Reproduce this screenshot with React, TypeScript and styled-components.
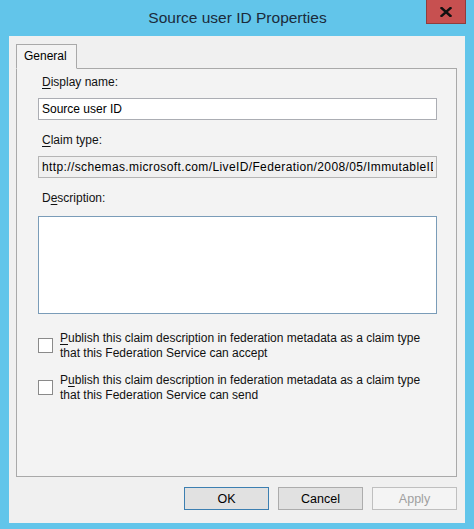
import React, { useState } from 'react';
import styled, { createGlobalStyle } from 'styled-components';

const GlobalStyle = createGlobalStyle`
  html, body {
    margin: 0;
    padding: 0;
    background: #62c5ea;
  }
  body {
    font-family: "Liberation Sans", Arial, sans-serif;
    font-size: 12px;
    color: #000;
  }
`;

const Window = styled.div`
  width: 474px;
  height: 529px;
  background: #62c5ea;
  display: flex;
  flex-direction: column;
  box-sizing: border-box;
  padding: 0 9px 6px;
`;

const TitleBar = styled.div`
  height: 36px;
  display: grid;
  grid-template-columns: 1fr auto 1fr;
  align-items: start;
  margin: 0 -1px 0 0;
`;

const Title = styled.div`
  grid-column: 2;
  padding-top: 9px;
  font-size: 15.5px;
  color: #1b2b3b;
  white-space: nowrap;
`;

const CloseButton = styled.button`
  grid-column: 3;
  justify-self: end;
  width: 40px;
  height: 24px;
  margin: 0;
  padding: 0;
  border: 1px solid #8f3d3d;
  border-top: none;
  background: #c75050;
  display: flex;
  align-items: center;
  justify-content: center;
  cursor: pointer;
`;

const Client = styled.div`
  flex: 1;
  background: #f0f0f0;
  display: flex;
  flex-direction: column;
  padding: 8px 8px 13px 7px;
  box-sizing: border-box;
`;

const TabStrip = styled.div`
  display: flex;
  height: 24px;
  position: relative;
  z-index: 1;
`;

const Tab = styled.div<{ $active?: boolean }>`
  width: 61px;
  box-sizing: border-box;
  border: 1px solid #a9a9a9;
  border-bottom: ${p => (p.$active ? '1px solid #f3f3f3' : '1px solid #a9a9a9')};
  background: ${p => (p.$active ? '#f3f3f3' : '#e8e8e8')};
  padding: 4px 0 0 7px;
  height: 25px;
`;

const Panel = styled.div`
  flex: 1;
  border: 1px solid #a9a9a9;
  background: #f3f3f3;
  padding: 5px 19px 0 21px;
  display: flex;
  flex-direction: column;
`;

const Label = styled.div`
  padding: 0 0 0 4px;
  height: 16px;
  line-height: 16px;
  margin-bottom: 8px;
  color: #111;
`;

const Key = styled.span`
  text-decoration: underline;
  text-underline-offset: 2px;
`;

const TextInput = styled.input<{ $readOnly?: boolean }>`
  box-sizing: border-box;
  width: 100%;
  height: 22px;
  margin: 0 0 12px;
  border: 1px solid ${p => (p.$readOnly ? '#b5b5b5' : '#abadb3')};
  background: ${p => (p.$readOnly ? '#f0f0f0' : '#fff')};
  padding: 0 3px;
  font: inherit;
  letter-spacing: ${p => (p.$readOnly ? '0.38px' : 'normal')};
  color: #000;
  outline: none;
`;

const TextArea = styled.textarea`
  box-sizing: border-box;
  width: 100%;
  height: 98px;
  margin: 2px 0 17px;
  border: 1px solid #7a9cb8;
  background: #fff;
  padding: 2px 3px;
  font: inherit;
  resize: none;
  outline: none;
`;

const CheckRow = styled.label`
  display: flex;
  align-items: center;
  gap: 7px;
  margin-bottom: 13px;
  cursor: default;
`;

const Box = styled.span`
  flex: none;
  width: 15px;
  height: 15px;
  box-sizing: border-box;
  border: 1px solid #8a8a8a;
  background: #fff;
  display: inline-block;
`;

const CheckText = styled.span`
  line-height: 14.5px;
  color: #111;
`;

const ButtonRow = styled.div`
  display: flex;
  justify-content: flex-end;
  gap: 9px;
  padding-top: 10px;
`;

const Button = styled.button<{ $default?: boolean }>`
  width: 85px;
  height: 23px;
  box-sizing: border-box;
  font: inherit;
  font-size: 12.5px;
  color: ${p => (p.disabled ? '#a0a0a0' : '#000')};
  border: 1px solid ${p => (p.$default ? '#3c7fb1' : p.disabled ? '#bfbfbf' : '#acacac')};
  background: ${p => (p.disabled ? '#f4f4f4' : '#e1e1e1')};
  padding: 0;
`;

const App: React.FC = () => {
  const [name, setName] = useState('Source user ID');
  const [desc, setDesc] = useState('');

  return (
    <>
      <GlobalStyle />
      <Window>
        <TitleBar>
          <Title>Source user ID Properties</Title>
          <CloseButton aria-label="Close">
            <svg width="12" height="10" viewBox="0 0 12 10">
              <path d="M1.5 1 L10.5 9 M10.5 1 L1.5 9" stroke="#111" strokeWidth="2.4" strokeLinecap="square" />
            </svg>
          </CloseButton>
        </TitleBar>

        <Client>
          <TabStrip>
            <Tab $active>General</Tab>
          </TabStrip>
          <Panel>
            <Label>
              <Key>D</Key>isplay name:
            </Label>
            <TextInput value={name} onChange={e => setName(e.target.value)} />

            <Label>
              <Key>C</Key>laim type:
            </Label>
            <TextInput
              $readOnly
              readOnly
              value="http://schemas.microsoft.com/LiveID/Federation/2008/05/ImmutableID"
            />

            <Label>
              D<Key>e</Key>scription:
            </Label>
            <TextArea value={desc} onChange={e => setDesc(e.target.value)} autoFocus />

            <CheckRow>
              <Box />
              <CheckText>
                <Key>P</Key>ublish this claim description in federation metadata as a claim type
                <br />
                that this Federation Service can accept
              </CheckText>
            </CheckRow>
            <CheckRow>
              <Box />
              <CheckText>
                P<Key>u</Key>blish this claim description in federation metadata as a claim type
                <br />
                that this Federation Service can send
              </CheckText>
            </CheckRow>
          </Panel>

          <ButtonRow>
            <Button $default>OK</Button>
            <Button>Cancel</Button>
            <Button disabled>Apply</Button>
          </ButtonRow>
        </Client>
      </Window>
    </>
  );
};

export default App;
